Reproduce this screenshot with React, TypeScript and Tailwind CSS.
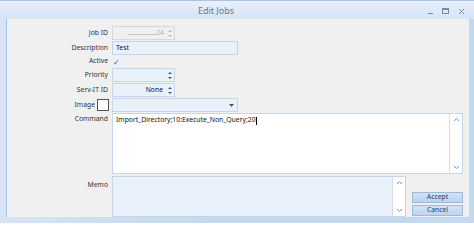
import React from 'react';

const font = { fontFamily: '"Noto Sans", "Open Sans", sans-serif' };

function Spin({ muted }: { muted?: boolean }) {
  const c = muted ? '#b8b8b8' : '#555';
  return (
    <div className="flex flex-col items-center justify-center gap-[3px] w-[8px] h-full">
      <svg width="4" height="2" viewBox="0 0 4 2"><path d="M0 2 L2 0 L4 2 Z" fill={c} /></svg>
      <svg width="4" height="2" viewBox="0 0 4 2"><path d="M0 0 L2 2 L4 0 Z" fill={c} /></svg>
    </div>
  );
}

function Chevron({ up }: { up?: boolean }) {
  return (
    <svg width="7" height="5" viewBox="0 0 7 5">
      <path d={up ? 'M1 4 L3.5 1.5 L6 4' : 'M1 1 L3.5 3.5 L6 1'} stroke="#8494a6" strokeWidth="1" fill="none" />
    </svg>
  );
}

function ScrollBar() {
  return (
    <div className="w-[13px] h-full flex flex-col justify-between items-center border-l border-[#d6dde6] bg-white py-[3px]">
      <Chevron up />
      <Chevron />
    </div>
  );
}

function Label({ children }: { children: React.ReactNode }) {
  return <div className="flex items-center justify-end pr-[4px] text-[#333]">{children}</div>;
}

export default function App() {
  return (
    <div className="w-[474px] h-[223px] bg-[#c3d7ef] flex flex-col text-[6.8px] leading-none" style={font}>
      {/* Title bar */}
      <div className="h-[21px] flex items-center bg-gradient-to-b from-[#e8f0fa] to-[#d5e4f6] border-t border-[#aac4e6]">
        <div className="flex-1 text-center text-[9px] text-[#6b7888] pl-[4px]">Edit Jobs</div>
        <div className="flex items-center gap-[9px] pr-[9px] pt-[2px]">
          <div className="w-[5px] h-[1px] bg-[#7a8a9c] mt-[4px]" />
          <div className="w-[7px] h-[6px] border border-[#7a8a9c] border-t-2" />
          <svg width="7" height="7" viewBox="0 0 7 7"><path d="M1 1 L6 6 M6 1 L1 6" stroke="#7a8a9c" strokeWidth="1" /></svg>
        </div>
      </div>
      {/* Body */}
      <div className="flex-1 flex pl-[6px] pr-[5px] pb-[6px] bg-gradient-to-r from-[#d6e4f5] via-[#c3d7ef] to-[#c3d7ef]">
        <div className="flex-1 bg-[#f0f0f0] border-l border-[#a9c2e3] pt-[7px] pr-[6px]">
          <div className="grid grid-cols-[105px_1fr] gap-y-[1px]">
            <Label>Job ID</Label>
            <div className="h-[14px] w-[63px] border border-[#d8d8d8] bg-[#f0f0f0] flex items-center justify-end">
              <span className="text-[#b0b0b0] flex items-end">
                <span className="inline-block w-[28px] border-b border-[#c5c5c5] mb-[1px]" />
                <span className="pr-[2px]">24</span>
              </span>
              <Spin muted />
            </div>

            <Label>Description</Label>
            <div className="h-[14px] w-[126px] border border-[#c5d6ea] bg-[#e9f1fb] flex items-center pl-[3px] text-[#111]">Test</div>

            <Label>Active</Label>
            <div className="h-[11px] flex items-center">
              <div className="w-[9px] h-[9px] flex items-center justify-center bg-[#e9f1fb] text-[#3a5fa0] text-[8px]">✓</div>
            </div>

            <Label>Priority</Label>
            <div className="h-[14px] w-[63px] border border-[#c5d6ea] bg-[#e9f1fb] flex items-center justify-end">
              <Spin />
            </div>

            <Label>Serv-IT ID</Label>
            <div className="h-[14px] w-[63px] border border-[#c5d6ea] bg-[#e9f1fb] flex items-center justify-end text-[#111]">
              <span className="pr-[3px]">None</span>
              <Spin />
            </div>

            <div className="flex items-center justify-end pr-[3px] gap-[2px] text-[#333]">
              <span>Image</span>
              <div className="w-[12px] h-[12px] border border-[#555] bg-white" />
            </div>
            <div className="h-[14px] w-[126px] border border-[#c5d6ea] bg-[#e9f1fb] flex items-center justify-end pr-[3px]">
              <svg width="5" height="3" viewBox="0 0 5 3"><path d="M0 0 L2.5 3 L5 0 Z" fill="#555" /></svg>
            </div>

            <div className="flex items-start justify-end pr-[4px] pt-[3px] text-[#333]">Command</div>
            <div className="h-[61px] border border-[#c5d6ea] bg-white flex">
              <div className="flex-1 pl-[3px] pt-[3px] text-[#111]">
                Import_Directory;10:Execute_Non_Query;20<span className="inline-block w-[1px] h-[8px] bg-black align-top" />
              </div>
              <ScrollBar />
            </div>

            <div className="flex items-start justify-end pr-[4px] pt-[6px] text-[#333] mt-[1px]">Memo</div>
            <div className="h-[41px] flex mt-[1px]">
              <div className="flex-1 border border-[#c5d6ea] bg-[#e9f1fb] flex justify-end">
                <ScrollBar />
              </div>
              <div className="w-[51px] ml-[6px] flex flex-col justify-end gap-[2px] pb-[1px]">
                <div className="h-[11px] border border-[#9fb9d9] bg-gradient-to-b from-[#d4e3f5] to-[#bdd2ee] flex items-center justify-center text-[#243f66]">Accept</div>
                <div className="h-[11px] border border-[#9fb9d9] bg-gradient-to-b from-[#d4e3f5] to-[#bdd2ee] flex items-center justify-center text-[#243f66]">Cancel</div>
              </div>
            </div>
          </div>
        </div>
      </div>
    </div>
  );
}
